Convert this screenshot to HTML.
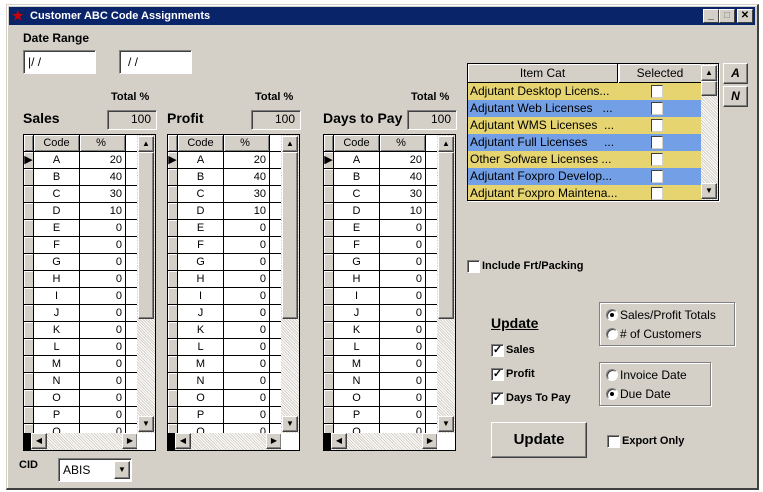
<!DOCTYPE html>
<html><head><meta charset="utf-8"><style>
*{box-sizing:border-box;margin:0;padding:0}
body{width:763px;height:492px;background:#fff;position:relative;overflow:hidden;font-family:"Liberation Sans",sans-serif;font-size:11px;color:#000}
.a{position:absolute}
.win{left:6px;top:4px;width:753px;height:486px;background:#d4d0c8;border:1px solid #d4d0c8;border-right:2px solid #404040;border-bottom:2px solid #404040;box-shadow:inset 1px 1px 0 #fff}
.title{left:9px;top:7px;width:746px;height:18px;background:#0a246a;color:#fff;font-weight:bold;font-size:11px;line-height:18px;padding-left:21px}
.tb{top:9px;width:16px;height:14px;background:#d4d0c8;border:1px solid;border-color:#fff #404040 #404040 #fff;font-size:10px;line-height:12px;text-align:center;font-weight:bold}
.b{font-weight:bold}
.sunk{background:#fff;border:1px solid;border-color:#808080 #fff #fff #808080;box-shadow:inset 1px 1px 0 #404040}
.tot{background:#d4d0c8;text-align:right;padding-right:5px;font-size:12px;line-height:17px}
.raised{background:#d4d0c8;border:1px solid;border-color:#fff #404040 #404040 #fff;box-shadow:inset -1px -1px 0 #808080}
.grid{width:133px;height:317px;border:1px solid #000;background:#fff;overflow:hidden}
.grid .r{position:absolute;left:0;width:114px;height:17px;border-bottom:1px solid #000}
.grid .r span{position:absolute;top:0;height:16px;line-height:16px;text-align:center}
.ind{left:0;width:10px;background:#d4d0c8;border-right:1px solid #000;box-shadow:inset 1px 1px 0 #fff}
.c1{left:10px;width:46px;border-right:1px solid #000}
.c2{left:56px;width:46px;border-right:1px solid #000;text-align:right!important;padding-right:3px}
.hd span{background:#d4d0c8;box-shadow:inset 1px 1px 0 #fff,inset -1px -1px 0 #808080}
.vs{right:0;top:0;width:18px;height:298px;background:#e8e6e2;background-image:repeating-linear-gradient(45deg,#d4d0c8 0 1px,#fff 1px 2px)}
.hs{left:7px;bottom:0;width:107px;height:17px;background-image:repeating-linear-gradient(45deg,#d4d0c8 0 1px,#fff 1px 2px)}
.sb{width:16px;height:16px;font-size:8px;line-height:14px;text-align:center}
.ck{width:13px;height:13px;background:#fff;border:1px solid;border-color:#808080 #fff #fff #808080;box-shadow:inset 1px 1px 0 #404040;font-size:11px;line-height:11px;text-align:center;font-weight:bold}
.rd{width:12px;height:12px;border-radius:50%;background:#fff;border:1px solid;border-color:#808080 #fff #fff #808080;box-shadow:inset 1px 1px 0 #404040}
.rd.on::after{content:"";position:absolute;left:3px;top:3px;width:4px;height:4px;border-radius:50%;background:#000}
.grp{border:1px solid #808080;box-shadow:1px 1px 0 #fff,inset 1px 1px 0 #fff}
.ic .r{position:absolute;left:0;width:233px;height:17px;line-height:16px;padding-left:2px;font-size:12px}
.y{background:#e6d470}.bl{background:#729fe6}
.ic .cb{position:absolute;left:183px;top:2px;width:12px;height:13px;background:#fff;border:1px solid #404040;border-right-color:#d4d0c8;border-bottom-color:#d4d0c8}
</style></head><body>
<div class="a win"></div>
<div class="a title">Customer ABC Code Assignments</div>
<div class="a" style="left:12px;top:9px;color:#c00;font-weight:bold;font-size:13px;line-height:14px">★</div>
<div class="a tb" style="left:703px">_</div>
<div class="a tb" style="left:719px;color:#808080">□</div>
<div class="a tb" style="left:737px">✕</div>

<div class="a b" style="left:23px;top:31px;font-size:12px">Date Range</div>
<div class="a sunk" style="left:23px;top:50px;width:73px;height:24px;line-height:22px;padding-left:4px;font-size:12px">|/ /</div>
<div class="a sunk" style="left:119px;top:50px;width:73px;height:24px;line-height:22px;padding-left:8px;font-size:12px">/ /</div>

<!-- Sales -->
<div class="a b" style="left:111px;top:91px;font-size:11px">Total %</div>
<div class="a b" style="left:23px;top:110px;font-size:14px">Sales</div>
<div class="a sunk tot" style="left:107px;top:110px;width:50px;height:20px">100</div>
<div class="a b" style="left:255px;top:91px;font-size:11px">Total %</div>
<div class="a b" style="left:167px;top:110px;font-size:14px">Profit</div>
<div class="a sunk tot" style="left:251px;top:110px;width:50px;height:20px">100</div>
<div class="a b" style="left:411px;top:91px;font-size:11px">Total %</div>
<div class="a b" style="left:323px;top:110px;font-size:14px">Days to Pay</div>
<div class="a sunk tot" style="left:407px;top:110px;width:50px;height:20px">100</div>

<div class="a grid" id="g1" style="left:23px;top:134px">
<div class="r hd" style="top:0"><span class="ind"></span><span class="c1" style="background:#d4d0c8">Code</span><span class="c2" style="background:#d4d0c8;text-align:center!important">%</span></div>
<div class="r" style="top:17px"><span class="ind">▶</span><span class="c1">A</span><span class="c2">20</span></div>
<div class="r" style="top:34px"><span class="ind"></span><span class="c1">B</span><span class="c2">40</span></div>
<div class="r" style="top:51px"><span class="ind"></span><span class="c1">C</span><span class="c2">30</span></div>
<div class="r" style="top:68px"><span class="ind"></span><span class="c1">D</span><span class="c2">10</span></div>
<div class="r" style="top:85px"><span class="ind"></span><span class="c1">E</span><span class="c2">0</span></div>
<div class="r" style="top:102px"><span class="ind"></span><span class="c1">F</span><span class="c2">0</span></div>
<div class="r" style="top:119px"><span class="ind"></span><span class="c1">G</span><span class="c2">0</span></div>
<div class="r" style="top:136px"><span class="ind"></span><span class="c1">H</span><span class="c2">0</span></div>
<div class="r" style="top:153px"><span class="ind"></span><span class="c1">I</span><span class="c2">0</span></div>
<div class="r" style="top:170px"><span class="ind"></span><span class="c1">J</span><span class="c2">0</span></div>
<div class="r" style="top:187px"><span class="ind"></span><span class="c1">K</span><span class="c2">0</span></div>
<div class="r" style="top:204px"><span class="ind"></span><span class="c1">L</span><span class="c2">0</span></div>
<div class="r" style="top:221px"><span class="ind"></span><span class="c1">M</span><span class="c2">0</span></div>
<div class="r" style="top:238px"><span class="ind"></span><span class="c1">N</span><span class="c2">0</span></div>
<div class="r" style="top:255px"><span class="ind"></span><span class="c1">O</span><span class="c2">0</span></div>
<div class="r" style="top:272px"><span class="ind"></span><span class="c1">P</span><span class="c2">0</span></div>
<div class="r" style="top:289px"><span class="ind"></span><span class="c1">Q</span><span class="c2">0</span></div>
<div class="a vs"><div class="a raised sb" style="left:1px;top:1px">▲</div><div class="a raised" style="left:1px;top:17px;width:16px;height:167px"></div><div class="a raised sb" style="left:1px;top:281px">▼</div></div>
<div class="a" style="left:0;bottom:0;width:7px;height:17px;background:#000"></div>
<div class="a hs"><div class="a raised sb" style="left:0;top:0">◀</div><div class="a raised sb" style="left:91px;top:0">▶</div></div>
<div class="a" style="right:0;bottom:0;width:18px;height:17px;background:#fff"></div>
</div>

<div class="a grid" style="left:167px;top:134px">
<div class="r hd" style="top:0"><span class="ind"></span><span class="c1" style="background:#d4d0c8">Code</span><span class="c2" style="background:#d4d0c8;text-align:center!important">%</span></div>
<div class="r" style="top:17px"><span class="ind">▶</span><span class="c1">A</span><span class="c2">20</span></div>
<div class="r" style="top:34px"><span class="ind"></span><span class="c1">B</span><span class="c2">40</span></div>
<div class="r" style="top:51px"><span class="ind"></span><span class="c1">C</span><span class="c2">30</span></div>
<div class="r" style="top:68px"><span class="ind"></span><span class="c1">D</span><span class="c2">10</span></div>
<div class="r" style="top:85px"><span class="ind"></span><span class="c1">E</span><span class="c2">0</span></div>
<div class="r" style="top:102px"><span class="ind"></span><span class="c1">F</span><span class="c2">0</span></div>
<div class="r" style="top:119px"><span class="ind"></span><span class="c1">G</span><span class="c2">0</span></div>
<div class="r" style="top:136px"><span class="ind"></span><span class="c1">H</span><span class="c2">0</span></div>
<div class="r" style="top:153px"><span class="ind"></span><span class="c1">I</span><span class="c2">0</span></div>
<div class="r" style="top:170px"><span class="ind"></span><span class="c1">J</span><span class="c2">0</span></div>
<div class="r" style="top:187px"><span class="ind"></span><span class="c1">K</span><span class="c2">0</span></div>
<div class="r" style="top:204px"><span class="ind"></span><span class="c1">L</span><span class="c2">0</span></div>
<div class="r" style="top:221px"><span class="ind"></span><span class="c1">M</span><span class="c2">0</span></div>
<div class="r" style="top:238px"><span class="ind"></span><span class="c1">N</span><span class="c2">0</span></div>
<div class="r" style="top:255px"><span class="ind"></span><span class="c1">O</span><span class="c2">0</span></div>
<div class="r" style="top:272px"><span class="ind"></span><span class="c1">P</span><span class="c2">0</span></div>
<div class="r" style="top:289px"><span class="ind"></span><span class="c1">Q</span><span class="c2">0</span></div>
<div class="a vs"><div class="a raised sb" style="left:1px;top:1px">▲</div><div class="a raised" style="left:1px;top:17px;width:16px;height:167px"></div><div class="a raised sb" style="left:1px;top:281px">▼</div></div>
<div class="a" style="left:0;bottom:0;width:7px;height:17px;background:#000"></div>
<div class="a hs"><div class="a raised sb" style="left:0;top:0">◀</div><div class="a raised sb" style="left:91px;top:0">▶</div></div>
<div class="a" style="right:0;bottom:0;width:18px;height:17px;background:#fff"></div>
</div>

<div class="a grid" style="left:323px;top:134px">
<div class="r hd" style="top:0"><span class="ind"></span><span class="c1" style="background:#d4d0c8">Code</span><span class="c2" style="background:#d4d0c8;text-align:center!important">%</span></div>
<div class="r" style="top:17px"><span class="ind">▶</span><span class="c1">A</span><span class="c2">20</span></div>
<div class="r" style="top:34px"><span class="ind"></span><span class="c1">B</span><span class="c2">40</span></div>
<div class="r" style="top:51px"><span class="ind"></span><span class="c1">C</span><span class="c2">30</span></div>
<div class="r" style="top:68px"><span class="ind"></span><span class="c1">D</span><span class="c2">10</span></div>
<div class="r" style="top:85px"><span class="ind"></span><span class="c1">E</span><span class="c2">0</span></div>
<div class="r" style="top:102px"><span class="ind"></span><span class="c1">F</span><span class="c2">0</span></div>
<div class="r" style="top:119px"><span class="ind"></span><span class="c1">G</span><span class="c2">0</span></div>
<div class="r" style="top:136px"><span class="ind"></span><span class="c1">H</span><span class="c2">0</span></div>
<div class="r" style="top:153px"><span class="ind"></span><span class="c1">I</span><span class="c2">0</span></div>
<div class="r" style="top:170px"><span class="ind"></span><span class="c1">J</span><span class="c2">0</span></div>
<div class="r" style="top:187px"><span class="ind"></span><span class="c1">K</span><span class="c2">0</span></div>
<div class="r" style="top:204px"><span class="ind"></span><span class="c1">L</span><span class="c2">0</span></div>
<div class="r" style="top:221px"><span class="ind"></span><span class="c1">M</span><span class="c2">0</span></div>
<div class="r" style="top:238px"><span class="ind"></span><span class="c1">N</span><span class="c2">0</span></div>
<div class="r" style="top:255px"><span class="ind"></span><span class="c1">O</span><span class="c2">0</span></div>
<div class="r" style="top:272px"><span class="ind"></span><span class="c1">P</span><span class="c2">0</span></div>
<div class="r" style="top:289px"><span class="ind"></span><span class="c1">Q</span><span class="c2">0</span></div>
<div class="a vs"><div class="a raised sb" style="left:1px;top:1px">▲</div><div class="a raised" style="left:1px;top:17px;width:16px;height:167px"></div><div class="a raised sb" style="left:1px;top:281px">▼</div></div>
<div class="a" style="left:0;bottom:0;width:7px;height:17px;background:#000"></div>
<div class="a hs"><div class="a raised sb" style="left:0;top:0">◀</div><div class="a raised sb" style="left:91px;top:0">▶</div></div>
<div class="a" style="right:0;bottom:0;width:18px;height:17px;background:#fff"></div>
</div>

<!-- Item Cat -->
<div class="a ic" style="left:467px;top:63px;width:252px;height:138px;border:1px solid #000;background:#fff;overflow:hidden;box-shadow:1px 1px 0 #fff">
<div class="a" style="left:0;top:0;width:150px;height:19px;background:#d4d0c8;border-right:1px solid #000;border-bottom:1px solid #000;box-shadow:inset 1px 1px 0 #fff;text-align:center;line-height:18px;font-size:12px">Item Cat</div>
<div class="a" style="left:151px;top:0;width:82px;height:19px;background:#d4d0c8;border-bottom:1px solid #000;box-shadow:inset 1px 1px 0 #fff;text-align:center;line-height:18px;font-size:12px">Selected</div>
<div class="r y" style="top:19px">Adjutant Desktop Licens...<i class="cb"></i></div>
<div class="r bl" style="top:36px">Adjutant Web Licenses &nbsp; ...<i class="cb"></i></div>
<div class="r y" style="top:53px">Adjutant WMS Licenses &nbsp;...<i class="cb"></i></div>
<div class="r bl" style="top:70px">Adjutant Full Licenses &nbsp; &nbsp; ...<i class="cb"></i></div>
<div class="r y" style="top:87px">Other Sofware Licenses ...<i class="cb"></i></div>
<div class="r bl" style="top:104px">Adjutant Foxpro Develop...<i class="cb"></i></div>
<div class="r y" style="top:121px">Adjutant Foxpro Maintena...<i class="cb"></i></div>
<div class="a" style="left:233px;top:0;width:17px;height:136px;background-image:repeating-linear-gradient(45deg,#d4d0c8 0 1px,#fff 1px 2px)"><div class="a raised sb" style="left:0;top:1px">▲</div><div class="a raised" style="left:0;top:17px;width:16px;height:15px"></div><div class="a raised sb" style="left:0;top:119px">▼</div></div>
</div>
<div class="a raised b" style="left:723px;top:63px;width:25px;height:21px;text-align:center;line-height:19px;font-size:12px;font-style:italic">A</div>
<div class="a raised b" style="left:723px;top:86px;width:25px;height:21px;text-align:center;line-height:19px;font-size:12px;font-style:italic">N</div>

<div class="a ck" style="left:467px;top:260px"></div>
<div class="a b" style="left:482px;top:260px;font-size:11px">Include Frt/Packing</div>

<div class="a b" style="left:491px;top:315px;font-size:14px;text-decoration:underline">Update</div>
<div class="a ck" style="left:491px;top:344px">✓</div><div class="a b" style="left:506px;top:344px">Sales</div>
<div class="a ck" style="left:491px;top:368px">✓</div><div class="a b" style="left:506px;top:368px">Profit</div>
<div class="a ck" style="left:491px;top:392px">✓</div><div class="a b" style="left:506px;top:392px">Days To Pay</div>

<div class="a grp" style="left:599px;top:302px;width:136px;height:44px"></div>
<div class="a rd on" style="left:606px;top:309px"></div><div class="a" style="left:620px;top:308px;font-size:12px">Sales/Profit Totals</div>
<div class="a rd" style="left:606px;top:328px"></div><div class="a" style="left:620px;top:327px;font-size:12px">#  of Customers</div>
<div class="a grp" style="left:599px;top:362px;width:112px;height:44px"></div>
<div class="a rd" style="left:606px;top:369px"></div><div class="a" style="left:620px;top:368px;font-size:12px">Invoice Date</div>
<div class="a rd on" style="left:606px;top:388px"></div><div class="a" style="left:620px;top:387px;font-size:12px">Due Date</div>

<div class="a raised b" style="left:491px;top:422px;width:96px;height:36px;text-align:center;line-height:33px;font-size:15px">Update</div>
<div class="a ck" style="left:607px;top:435px"></div><div class="a b" style="left:622px;top:435px">Export Only</div>

<div class="a b" style="left:19px;top:459px">CID</div>
<div class="a sunk" style="left:58px;top:458px;width:74px;height:24px;line-height:22px;padding-left:4px;font-size:12px">ABIS</div>
<div class="a raised sb" style="left:114px;top:461px;height:18px;line-height:16px">▼</div>
</body></html>
